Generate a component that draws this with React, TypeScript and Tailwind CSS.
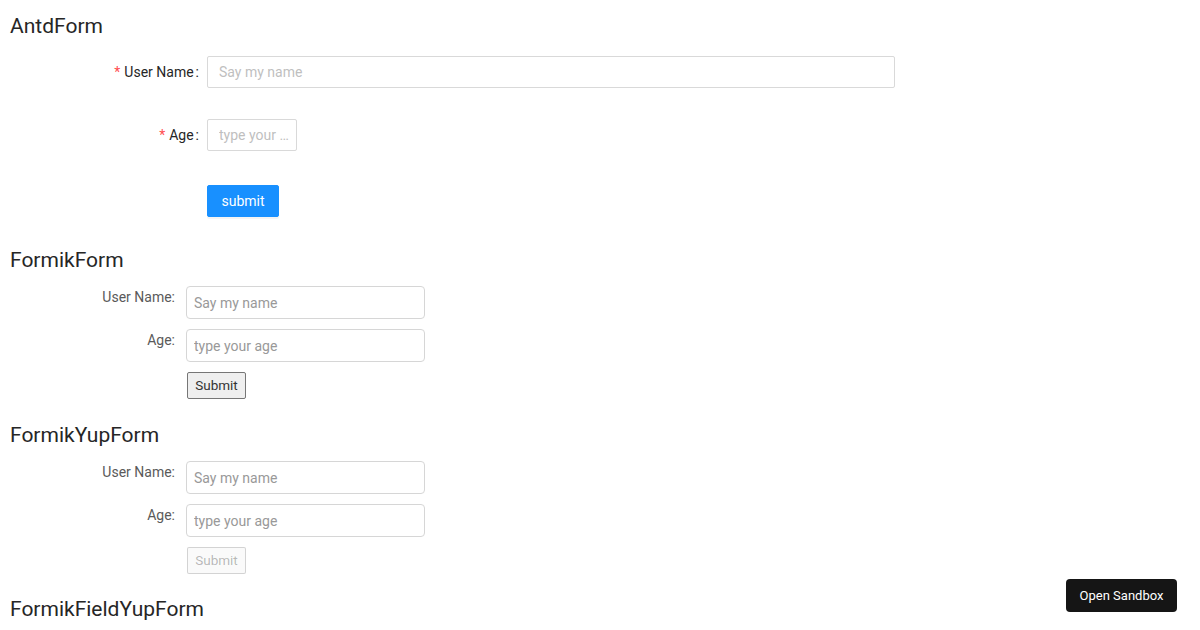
import React from 'react';

function AntdLabel({ text }: { text: string }) {
  return (
    <div className="flex w-[197px] shrink-0 items-center justify-end text-[14px] leading-[32px] text-[#262626]">
      <span className="mr-[4px] text-[14px] text-[#ff4d4f]">*</span>
      <span>{text}</span>
      <span className="ml-[2px] mr-[8px]">:</span>
    </div>
  );
}

function AntdForm() {
  return (
    <div className="mt-[17px]">
      <div className="flex h-[32px] items-center">
        <AntdLabel text="User Name" />
        <input
          placeholder="Say my name"
          className="h-[32px] w-[688px] rounded-[2px] border border-[#d9d9d9] bg-white px-[11px] text-[14px] text-[#262626] outline-none placeholder:text-[#bfbfbf]"
        />
      </div>
      <div className="mt-[31px] flex h-[32px] items-center">
        <AntdLabel text="Age" />
        <input
          placeholder="type your age"
          className="h-[32px] w-[90px] truncate rounded-[2px] border border-[#d9d9d9] bg-white pl-[11px] pr-[4px] text-[14px] text-[#262626] outline-none placeholder:text-[#bfbfbf]"
        />
      </div>
      <div className="mt-[34px] pl-[197px]">
        <button className="h-[32px] w-[72px] rounded-[2px] border border-[#1890ff] bg-[#1890ff] text-[14px] text-white shadow-[0_2px_0_rgba(0,0,0,0.045)]">
          submit
        </button>
      </div>
    </div>
  );
}

function FormikRow({ label, placeholder, first }: { label: string; placeholder: string; first?: boolean }) {
  return (
    <div className={first ? 'flex items-start' : 'mt-[10px] flex items-start'}>
      <label className="w-[165px] shrink-0 pt-[3px] text-right text-[14px] leading-[16px] text-[#5a5a5a]">{label}</label>
      <input
        placeholder={placeholder}
        className="ml-[11px] h-[33px] w-[239px] rounded-[4px] border border-[#d6d6d6] bg-white px-[7px] text-[14px] text-[#333] outline-none placeholder:text-[#999]"
      />
    </div>
  );
}

function FormikForm({ disabled, top }: { disabled?: boolean; top: string }) {
  return (
    <div className={top}>
      <FormikRow label="User Name:" placeholder="Say my name" first />
      <FormikRow label="Age:" placeholder="type your age" />
      <div className="mt-[10px] pl-[177px]">
        <button
          disabled={disabled}
          className={
            disabled
              ? 'h-[27px] w-[59px] rounded-[2px] border border-[rgba(118,118,118,0.3)] bg-[rgba(239,239,239,0.3)] text-[13.5px] text-[rgba(16,16,16,0.3)]'
              : 'h-[27px] w-[59px] rounded-[2px] border border-[#767676] bg-[#efefef] text-[13.5px] text-[#333]'
          }
        >
          Submit
        </button>
      </div>
    </div>
  );
}

export default function App() {
  return (
    <div className="relative h-[630px] overflow-hidden bg-white px-[10px] font-['Roboto',sans-serif]">
      <h2 className="pt-[14px] text-[21px] font-normal leading-[25px] text-[#262626]">AntdForm</h2>
      <AntdForm />

      <h2 className="mt-[31px] text-[21px] font-normal leading-[25px] text-[#262626]">FormikForm</h2>
      <FormikForm top="mt-[13px]" />

      <h2 className="mt-[24px] text-[21px] font-normal leading-[25px] text-[#262626]">FormikYupForm</h2>
      <FormikForm top="mt-[13px]" disabled />

      <h2 className="mt-[23px] text-[21px] font-normal leading-[25px] text-[#262626]">FormikFieldYupForm</h2>

      <button className="fixed bottom-[18px] right-[23px] h-[33px] w-[111px] rounded-[4px] bg-[#151515] text-[13px] text-white">
        Open Sandbox
      </button>
    </div>
  );
}
